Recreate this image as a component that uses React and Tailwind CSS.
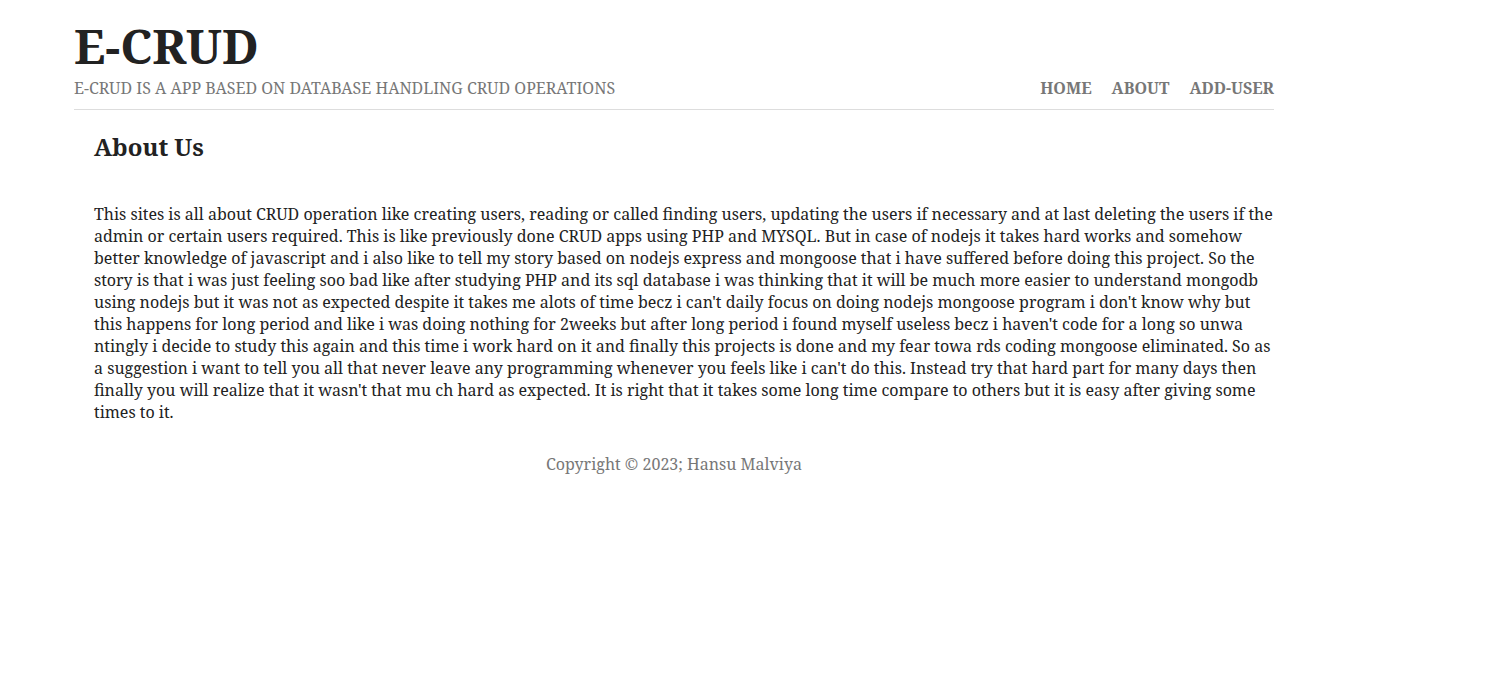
export default function App() {
  const text =
    "This sites is all about CRUD operation like creating users, reading or called finding users, updating the users if necessary and at last deleting the users if the admin or certain users required. This is like previously done CRUD apps using PHP and MYSQL. But in case of nodejs it takes hard works and somehow better knowledge of javascript and i also like to tell my story based on nodejs express and mongoose that i have suffered before doing this project. So the story is that i was just feeling soo bad like after studying PHP and its sql database i was thinking that it will be much more easier to understand mongodb using nodejs but it was not as expected despite it takes me alots of time becz i can't daily focus on doing nodejs mongoose program i don't know why but this happens for long period and like i was doing nothing for 2weeks but after long period i found myself useless becz i haven't code for a long so unwa ntingly i decide to study this again and this time i work hard on it and finally this projects is done and my fear towa rds coding mongoose eliminated. So as a suggestion i want to tell you all that never leave any programming whenever you feels like i can't do this. Instead try that hard part for many days then finally you will realize that it wasn't that mu ch hard as expected. It is right that it takes some long time compare to others but it is easy after giving some times to it.";
  return (
    <div className="min-h-[683px] bg-white text-[#222] [font-family:'Noto_Serif','DejaVu_Serif',serif]">
      <div className="ml-[74px] w-[1200px]">
        <header className="flex items-end justify-between border-b border-[#ddd] pt-[18px] pb-[11px]">
          <div>
            <h1 className="text-[48px] font-bold leading-[56px] text-[#222]">E-CRUD</h1>
            <p className="mt-[4px] text-[16px] leading-[20px] uppercase text-[#777]">
              E-CRUD is a app based on database handling crud operations
            </p>
          </div>
          <nav className="flex gap-[20px] text-[16px] font-bold leading-[20px] text-[#777]">
            <a>HOME</a>
            <a>ABOUT</a>
            <a>ADD-USER</a>
          </nav>
        </header>
        <main className="pl-[20px] pt-[21px]">
          <h2 className="text-[24px] font-bold leading-[32px]">About Us</h2>
          <p className="mt-[40px] text-[16px] leading-[22px]">{text}</p>
        </main>
        <footer className="mt-[30px] text-center text-[16px] leading-[22px] text-[#777]">
          Copyright © 2023; Hansu Malviya
        </footer>
      </div>
    </div>
  );
}
